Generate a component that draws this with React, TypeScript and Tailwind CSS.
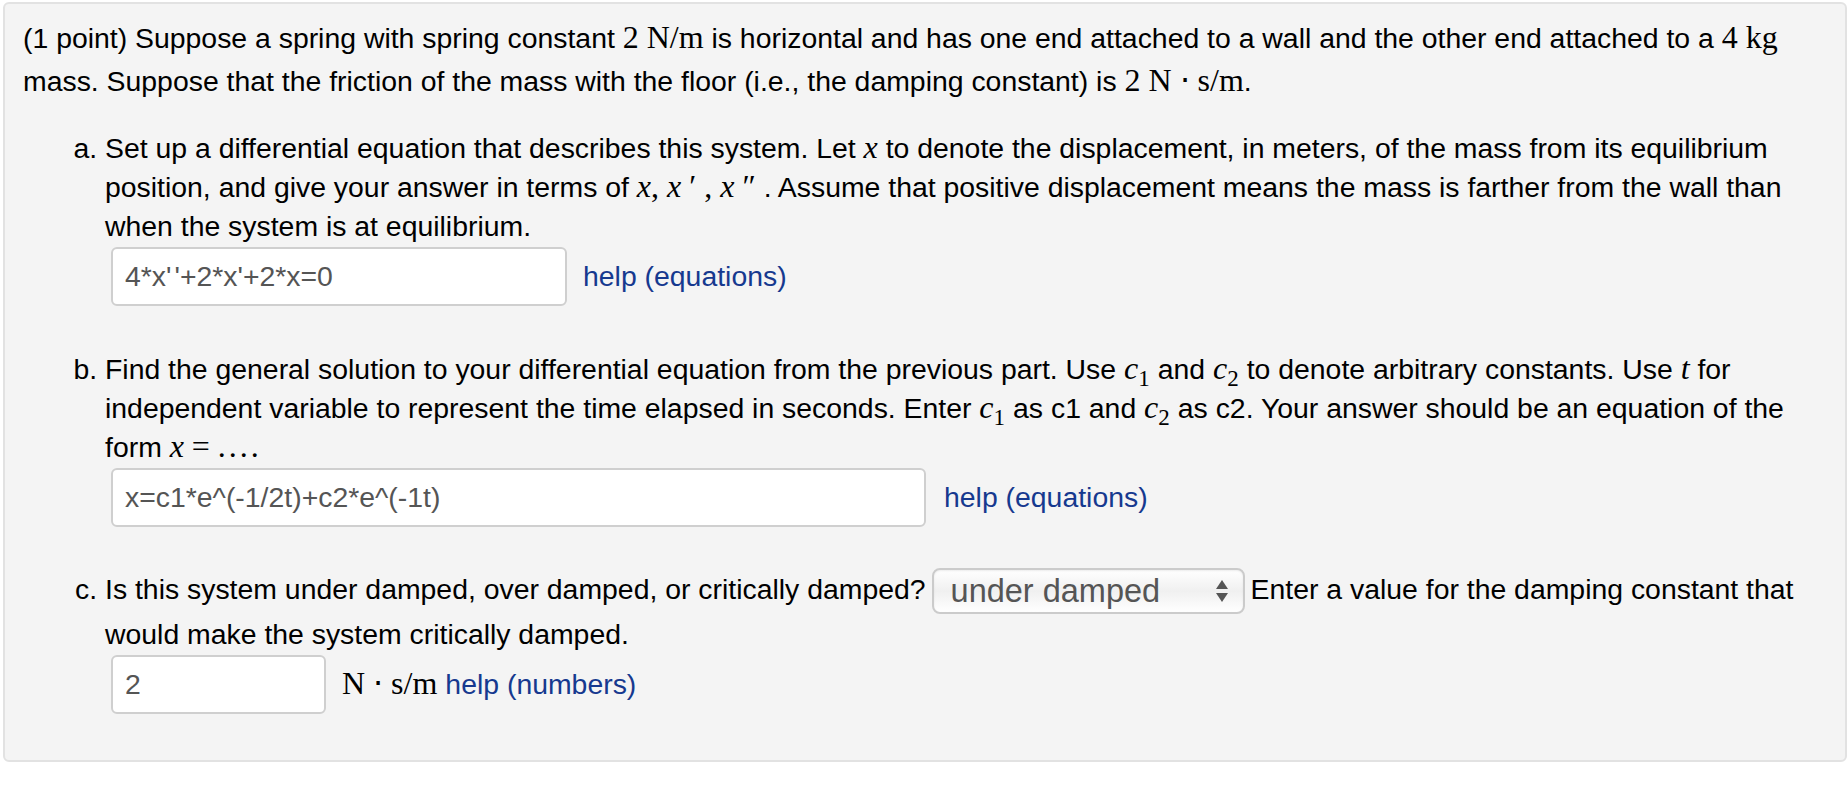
import React from 'react';

// math bits are set in a serif face, a little larger than the body text
const M: React.FC<{ children: React.ReactNode }> = ({ children }) => (
  <span className="font-['Liberation_Serif',serif] text-[32px] leading-none">{children}</span>
);

const V: React.FC<{ children: React.ReactNode }> = ({ children }) => (
  <span className="font-['Liberation_Serif',serif] text-[32px] italic leading-none">{children}</span>
);

const C: React.FC<{ n: string }> = ({ n }) => (
  <span className="font-['Liberation_Serif',serif] leading-none">
    <span className="text-[32px] italic">c</span>
    <span className="relative top-[7px] text-[23px]">{n}</span>
  </span>
);

const Help: React.FC<{ label: string }> = ({ label }) => (
  <a className="text-[#16398f] no-underline">help ({label})</a>
);

const AnswerBox: React.FC<{ children: React.ReactNode; width: string }> = ({ children, width }) => (
  <div
    className={`flex h-[59px] items-center rounded-[6px] border-2 border-[#cfcfcf] bg-white pl-[12px] text-[28.4px] text-[#555] ${width}`}
  >
    {children}
  </div>
);

const SelectBox: React.FC = () => (
  <span className="mx-[6px] my-[1px] inline-flex h-[46px] w-[313px] items-center justify-between rounded-[8px] border-2 border-[#cbcbcb] bg-gradient-to-b from-white via-[#f0f0f0] to-white pl-[17px] pr-[14px] align-middle text-[32.5px] leading-none text-[#555] shadow-[inset_0_1px_2px_rgba(0,0,0,0.08)]">
    <span>under damped</span>
    <svg width="14" height="24" viewBox="0 0 14 24" className="fill-[#555]">
      <polygon points="7,1 13,10 1,10" />
      <polygon points="1,14 13,14 7,23" />
    </svg>
  </span>
);

export default function App() {
  return (
    <div className="min-h-screen bg-white pl-[3px] pr-[1px] pt-[2px] font-['Liberation_Sans',Arial,sans-serif] text-[28.4px] text-black">
      <div className="rounded-[6px] border-2 border-[#e2e2e2] bg-[#f4f4f4] pb-[46px] pl-[18px] pt-[13px]">
        <p className="whitespace-nowrap leading-[43px]">
          (1 point) Suppose a spring with spring constant <M>2 N/m</M> is horizontal and has one end attached to a wall and
          the other end attached to a <M>4 kg</M>
          <br />
          mass. Suppose that the friction of the mass with the floor (i.e., the damping constant) is <M>2 N ⋅ s/m</M>.
        </p>

        <ol className="mt-[26px] list-[lower-alpha] pl-[82px] leading-[39px] whitespace-nowrap">
          <li>
            Set up a differential equation that describes this system. Let <V>x</V> to denote the displacement, in meters, of
            the mass from its equilibrium
            <br />
            position, and give your answer in terms of <V>x</V>
            <M>, </M>
            <V>x</V>
            <M> ′ , </M>
            <V>x</V>
            <M> ″</M> . Assume that positive displacement means the mass is farther from the wall than
            <br />
            when the system is at equilibrium.
            <div className="flex items-center gap-[16px] pl-[6px] pt-[1px]">
              <AnswerBox width="w-[456px]">
                4*x<span className="tracking-[3px]">'</span>'+2*x'+2*x=0
              </AnswerBox>
              <Help label="equations" />
            </div>
          </li>

          <li className="mt-[44px]">
            Find the general solution to your differential equation from the previous part. Use <C n="1" />
            <span className="ml-[8px]">and</span> <C n="2" />
            <span className="ml-[8px]">to denote arbitrary constants. Use</span> <V>t</V> for
            <br />
            independent variable to represent the time elapsed in seconds. Enter <C n="1" />
            <span className="ml-[8px]">as c1 and</span> <C n="2" />
            <span className="ml-[8px]">as c2. Your answer should be an equation of the</span>
            <br />
            form <V>x</V> <M>=</M> <span className="font-['Liberation_Serif',serif] text-[32px] leading-none tracking-[3px]">....</span>
            <div className="flex items-center gap-[18px] pl-[6px] pt-[1px]">
              <AnswerBox width="w-[815px]">x=c1*e^(-1/2t)+c2*e^(-1t)</AnswerBox>
              <Help label="equations" />
            </div>
          </li>

          <li className="mt-[40px]">
            Is this system under damped, over damped, or critically damped?
            <SelectBox />
            Enter a value for the damping constant that
            <br />
            would make the system critically damped.
            <div className="flex items-center pl-[6px] pt-[1px]">
              <AnswerBox width="w-[215px]">2</AnswerBox>
              <span className="ml-[16px] mr-[8px]">
                <M>N ⋅ s/m</M>
              </span>
              <Help label="numbers" />
            </div>
          </li>
        </ol>
      </div>
    </div>
  );
}
